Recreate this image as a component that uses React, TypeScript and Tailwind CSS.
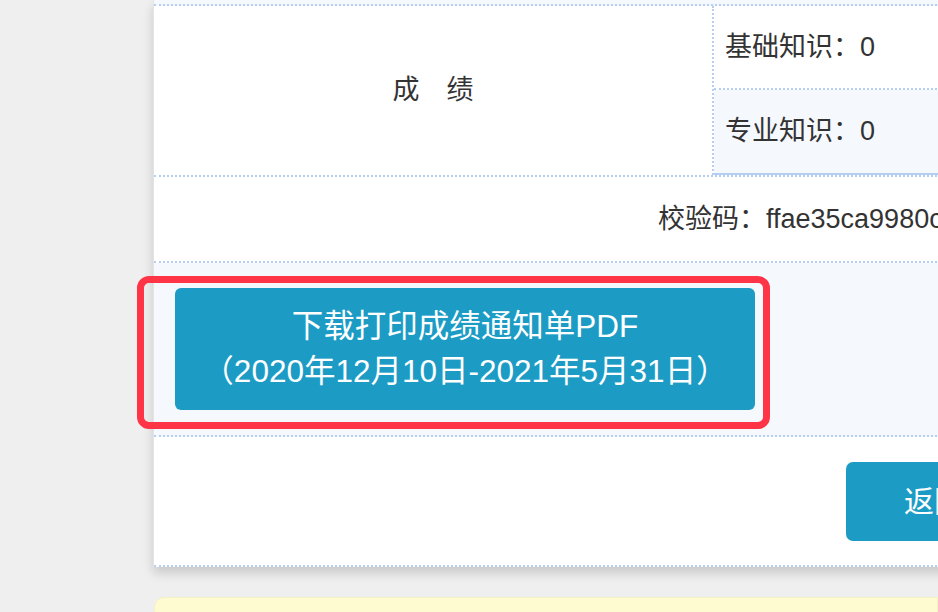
import React from "react";

const font = { fontFamily: '"Liberation Sans", "Noto Sans CJK SC", sans-serif' };

export default function App() {
  return (
    <div
      className="relative h-[612px] w-[938px] overflow-hidden bg-[#efefef] text-[#333333]"
      style={font}
    >
      <div className="ml-[153px] w-[1200px] border-l border-[#e4e4e4] bg-white shadow-[0_6px_10px_rgba(0,0,0,0.16)]">
        {/* tail of the previous row */}
        <div className="h-[6px] border-b-2 border-dotted border-[#b5cef2] bg-[#f5f9fe]" />

        {/* 成绩 */}
        <div className="flex h-[171px] border-b-2 border-dotted border-[#b5cef2]">
          <div className="flex w-[560px] items-center justify-center border-r-2 border-dotted border-[#b5cef2] text-[27px]">
            成　绩
          </div>
          <div className="flex flex-1 flex-col">
            <div className="flex h-[84px] items-center border-b-2 border-dotted border-[#b5cef2] pl-[11px] text-[27px]">
              基础知识：0
            </div>
            <div className="flex flex-1 items-center border-b-2 border-solid border-[#b5cef2] bg-[#f5f9fe] pl-[11px] text-[27px]">
              专业知识：0
            </div>
          </div>
        </div>

        {/* 校验码 */}
        <div className="flex h-[86px] items-center border-b-2 border-dotted border-[#b5cef2] pl-[504px] text-[27px]">
          校验码：ffae35ca9980c2b14e7d0a6f
        </div>

        {/* 下载 */}
        <div className="h-[174px] border-b-2 border-dotted border-[#b5cef2] bg-[#f5f9fe] pl-[21px] pt-[25px]">
          <button className="w-[580px] rounded-[6px] bg-[#1c9cc5] py-[16px] text-center text-[31.5px] leading-[45px] text-white">
            下载打印成绩通知单PDF
            <br />
            （2020年12月10日-2021年5月31日）
          </button>
        </div>

        {/* 返回 */}
        <div className="h-[130px] border-b-2 border-dotted border-[#b5cef2] pl-[692px] pt-[25px]">
          <button className="h-[79px] rounded-[7px] bg-[#1c9cc5] px-[58px] text-[30px] text-white">
            返回
          </button>
        </div>
      </div>

      <div className="ml-[154px] mt-[30px] h-[40px] rounded-tl-[10px] border border-[#f6f0c6] bg-[#fffbd1]" />

      {/* highlight annotation */}
      <div className="pointer-events-none absolute left-[137px] top-[276px] h-[153px] w-[633px] rounded-[12px] border-[7px] border-[#ff3446]" />
    </div>
  );
}
